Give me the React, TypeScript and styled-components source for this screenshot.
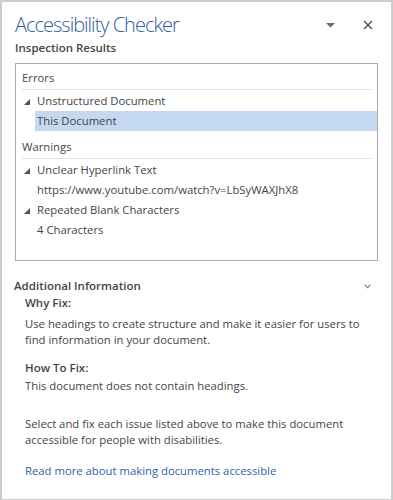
import React from "react";
import styled, { createGlobalStyle } from "styled-components";

const Global = createGlobalStyle`
  html, body { margin: 0; padding: 0; background: #ffffff; }
  body { font-family: "Open Sans", "Noto Sans", sans-serif; }
`;

const Pane = styled.div`
  box-sizing: border-box;
  width: 393px;
  height: 500px;
  border: 2px solid #cdcdcd;
  border-bottom-width: 1px;
  background: #ffffff;
  padding: 8px 13px 0 13px;
  display: flex;
  flex-direction: column;
  color: #444444;
  font-family: "Open Sans", "Noto Sans", sans-serif;
  font-size: 11.3px;
`;

const TitleBar = styled.div`
  display: flex;
  align-items: center;
  height: 30px;
`;

const Title = styled.h1`
  flex: 1;
  margin: 0;
  font-size: 20px;
  font-weight: 300;
  letter-spacing: -1px;
  line-height: 30px;
  color: #2f5d9f;
  white-space: nowrap;
`;

const IconButton = styled.button<{ $gap?: number }>`
  width: 20px;
  height: 20px;
  margin-left: ${(p) => p.$gap ?? 0}px;
  padding: 0;
  border: 0;
  background: transparent;
  display: flex;
  align-items: center;
  justify-content: center;
`;

const SectionLabel = styled.div<{ $mt?: number; $ml?: number }>`
  font-size: 11.5px;
  font-weight: 600;
  line-height: 16px;
  color: #444444;
  margin-top: ${(p) => p.$mt ?? 0}px;
  margin-left: ${(p) => p.$ml ?? 0}px;
  white-space: nowrap;
`;

const ResultsBox = styled.div`
  box-sizing: border-box;
  height: 198px;
  margin-top: 7px;
  border: 1px solid #acacac;
  padding-top: 3.5px;
  display: flex;
  flex-direction: column;
`;

const Group = styled.div<{ $mt?: number }>`
  margin-top: ${(p) => p.$mt ?? 0}px;
  display: flex;
  flex-direction: column;
`;

const GroupHeader = styled.div`
  margin: 0 5px 0 6px;
  padding-bottom: 1px;
  line-height: 20px;
  border-bottom: 1px solid #e2e2e2;
`;

const Rows = styled.div`
  padding-top: 1px;
  display: flex;
  flex-direction: column;
`;

const Row = styled.div`
  display: flex;
  height: 20px;
  line-height: 20px;
`;

const Expander = styled.div`
  width: 19px;
  flex: none;
  display: flex;
  justify-content: flex-end;
  align-items: flex-end;
  padding-right: 5px;
  box-sizing: border-box;
  padding-bottom: 6px;
`;

const RowLabel = styled.div<{ $selected?: boolean }>`
  flex: 1;
  padding-left: 2px;
  background: ${(p) => (p.$selected ? "#c5d8f1" : "transparent")};
  white-space: nowrap;
`;

const InfoHeader = styled.div`
  display: flex;
  align-items: center;
  justify-content: space-between;
  margin-top: 17px;
  margin-left: -1px;
  padding-right: 7px;
`;

const Info = styled.div`
  padding-left: 10px;
  display: flex;
  flex-direction: column;
`;

const Para = styled.p<{ $mt?: number }>`
  margin: ${(p) => p.$mt ?? 0}px 0 0 0;
  line-height: 16px;
  white-space: nowrap;
`;

const Link = styled.a`
  margin-top: 14.6px;
  line-height: 16px;
  color: #2e62a6;
  text-decoration: none;
  white-space: nowrap;
`;

const Triangle = () => (
  <svg width="6" height="6" viewBox="0 0 6 6">
    <polygon points="6,0 6,6 0,6" fill="#505050" />
  </svg>
);

const DropIcon = () => (
  <svg width="9" height="5" viewBox="0 0 9 5">
    <polygon points="0,0 9,0 4.5,4.5" fill="#6a6a6a" />
  </svg>
);

const CloseIcon = () => (
  <svg width="10" height="10" viewBox="0 0 10 10">
    <path d="M1 1 L9 9 M9 1 L1 9" stroke="#555555" strokeWidth="1.5" />
  </svg>
);

const Chevron = () => (
  <svg width="7" height="5" viewBox="0 0 7 5">
    <path d="M0.7 0.8 L3.5 3.6 L6.3 0.8" stroke="#8a8a8a" strokeWidth="1.3" fill="none" />
  </svg>
);

type Item = { title: string; child: string; selected?: boolean };

const groups: { name: string; items: Item[] }[] = [
  {
    name: "Errors",
    items: [{ title: "Unstructured Document", child: "This Document", selected: true }],
  },
  {
    name: "Warnings",
    items: [
      { title: "Unclear Hyperlink Text", child: "https://www.youtube.com/watch?v=LbSyWAXJhX8" },
      { title: "Repeated Blank Characters", child: "4 Characters" },
    ],
  },
];

export default function App() {
  return (
    <>
      <Global />
      <Pane>
        <TitleBar>
          <Title>Accessibility Checker</Title>
          <IconButton aria-label="Options">
            <DropIcon />
          </IconButton>
          <IconButton aria-label="Close" $gap={18}>
            <CloseIcon />
          </IconButton>
        </TitleBar>
        <SectionLabel>Inspection Results</SectionLabel>
        <ResultsBox>
          {groups.map((g, gi) => (
            <Group key={g.name} $mt={gi === 0 ? 0 : 6}>
              <GroupHeader>{g.name}</GroupHeader>
              <Rows>
                {g.items.map((it) => (
                  <React.Fragment key={it.title}>
                    <Row>
                      <Expander>
                        <Triangle />
                      </Expander>
                      <RowLabel>{it.title}</RowLabel>
                    </Row>
                    <Row>
                      <Expander />
                      <RowLabel $selected={it.selected}>{it.child}</RowLabel>
                    </Row>
                  </React.Fragment>
                ))}
              </Rows>
            </Group>
          ))}
        </ResultsBox>
        <InfoHeader>
          <SectionLabel>Additional Information</SectionLabel>
          <Chevron />
        </InfoHeader>
        <Info>
          <SectionLabel $mt={1}>Why Fix:</SectionLabel>
          <Para $mt={5}>
            Use headings to create structure and make it easier for users to
            <br />
            find information in your document.
          </Para>
          <SectionLabel $mt={12}>How To Fix:</SectionLabel>
          <Para $mt={2}>This document does not contain headings.</Para>
          <Para $mt={22.4}>
            Select and fix each issue listed above to make this document
            <br />
            accessible for people with disabilities.
          </Para>
          <Link href="#">Read more about making documents accessible</Link>
        </Info>
      </Pane>
    </>
  );
}
